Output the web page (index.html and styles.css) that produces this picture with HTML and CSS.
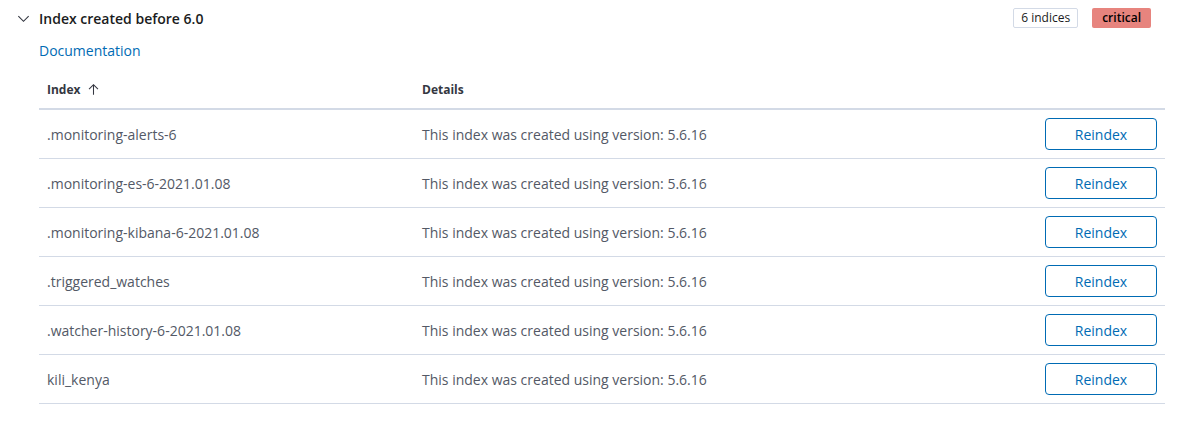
FILE: index.html
```html
<!DOCTYPE html>
<html lang="en">
<head>
    <meta charset="UTF-8">
    <title>Index created before 6.0</title>
    <link rel="stylesheet" href="styles.css">
</head>
<body>
    <div class="accordion">
        <div class="accordion-header">
            <button class="accordion-toggle">
                <svg class="chevron" viewBox="0 0 16 16" width="16" height="16">
                    <path d="M2.5 5.5 L8 11 L13.5 5.5" fill="none" stroke="currentColor" stroke-width="1.2"/>
                </svg>
                <span class="accordion-title">Index created before 6.0</span>
            </button>
            <div class="badges">
                <span class="badge badge-hollow">6 indices</span>
                <span class="badge badge-danger">critical</span>
            </div>
        </div>

        <div class="accordion-body">
            <a class="doc-link" href="#">Documentation</a>

            <table class="issues-table">
                <thead>
                    <tr>
                        <th class="col-index">Index
                            <svg class="sort-icon" viewBox="0 0 16 16" width="13" height="13">
                                <path d="M8 14.5 V2 M2.5 7.5 L8 2 L13.5 7.5" fill="none" stroke="currentColor" stroke-width="1.3"/>
                            </svg>
                        </th>
                        <th class="col-details">Details</th>
                        <th class="col-action"></th>
                    </tr>
                </thead>
                <tbody>
                    <tr>
                        <td>.monitoring-alerts-6</td>
                        <td>This index was created using version: 5.6.16</td>
                        <td class="col-action"><button class="btn-reindex">Reindex</button></td>
                    </tr>
                    <tr>
                        <td>.monitoring-es-6-2021.01.08</td>
                        <td>This index was created using version: 5.6.16</td>
                        <td class="col-action"><button class="btn-reindex">Reindex</button></td>
                    </tr>
                    <tr>
                        <td>.monitoring-kibana-6-2021.01.08</td>
                        <td>This index was created using version: 5.6.16</td>
                        <td class="col-action"><button class="btn-reindex">Reindex</button></td>
                    </tr>
                    <tr>
                        <td>.triggered_watches</td>
                        <td>This index was created using version: 5.6.16</td>
                        <td class="col-action"><button class="btn-reindex">Reindex</button></td>
                    </tr>
                    <tr>
                        <td>.watcher-history-6-2021.01.08</td>
                        <td>This index was created using version: 5.6.16</td>
                        <td class="col-action"><button class="btn-reindex">Reindex</button></td>
                    </tr>
                    <tr>
                        <td>kili_kenya</td>
                        <td>This index was created using version: 5.6.16</td>
                        <td class="col-action"><button class="btn-reindex">Reindex</button></td>
                    </tr>
                </tbody>
            </table>
        </div>
    </div>
</body>
</html>
```

FILE: styles.css
```css
:root {
    --text-dark: #1a1c21;
    --text-body: #535966;
    --link-color: #006bb4;
    --border-color: #d3dae6;
    --danger-bg: #e7847e;
}

body {
    margin: 0;
    background: white;
    font-family: 'Open Sans', 'Liberation Sans', sans-serif;
    font-size: 14px;
    color: var(--text-dark);
}

.accordion {
    padding: 6px 17px 0 16px;
}

.accordion-header {
    display: flex;
    align-items: center;
    justify-content: space-between;
    height: 24px;
}

.accordion-toggle {
    display: flex;
    align-items: center;
    gap: 8px;
    background: none;
    border: none;
    padding: 0;
    font-family: inherit;
    color: var(--text-dark);
    cursor: pointer;
}

.chevron {
    width: 15px;
    height: 15px;
    color: #343741;
}

.accordion-title {
    font-size: 14px;
    font-weight: 600;
}

.badges {
    display: flex;
    align-items: center;
    gap: 14px;
    margin-right: 14px;
}

.badge {
    display: inline-block;
    font-size: 12px;
    padding: 0 8px;
    border-radius: 2px;
}

.badge-hollow {
    border: 1px solid var(--border-color);
    line-height: 18px;
    padding: 0 7px;
    color: var(--text-dark);
}

.badge-danger {
    background: var(--danger-bg);
    color: #000;
    line-height: 20px;
    padding: 0 10px;
    font-weight: 600;
}

.accordion-body {
    padding: 0 0 0 23px;
}

.doc-link {
    display: inline-block;
    margin-top: 11px;
    color: var(--link-color);
    text-decoration: none;
    font-size: 14px;
}

.issues-table {
    width: 100%;
    margin-top: 18px;
    border-collapse: collapse;
}

.issues-table th {
    text-align: left;
    font-size: 12px;
    font-weight: 700;
    color: #343741;
    padding: 0 8px 8px;
    height: 22px;
    border-bottom: 2px solid var(--border-color);
}

.sort-icon {
    vertical-align: -2px;
    margin-left: 3px;
}

.col-index {
    width: 359px;
}

.issues-table td {
    height: 48px;
    padding: 0 8px;
    color: var(--text-body);
    border-bottom: 1px solid var(--border-color);
}

.col-action {
    text-align: right;
}

.btn-reindex {
    width: 112px;
    height: 32px;
    background: white;
    border: 1px solid var(--link-color);
    border-radius: 4px;
    color: var(--link-color);
    font-family: inherit;
    font-size: 14px;
    cursor: pointer;
}
```
